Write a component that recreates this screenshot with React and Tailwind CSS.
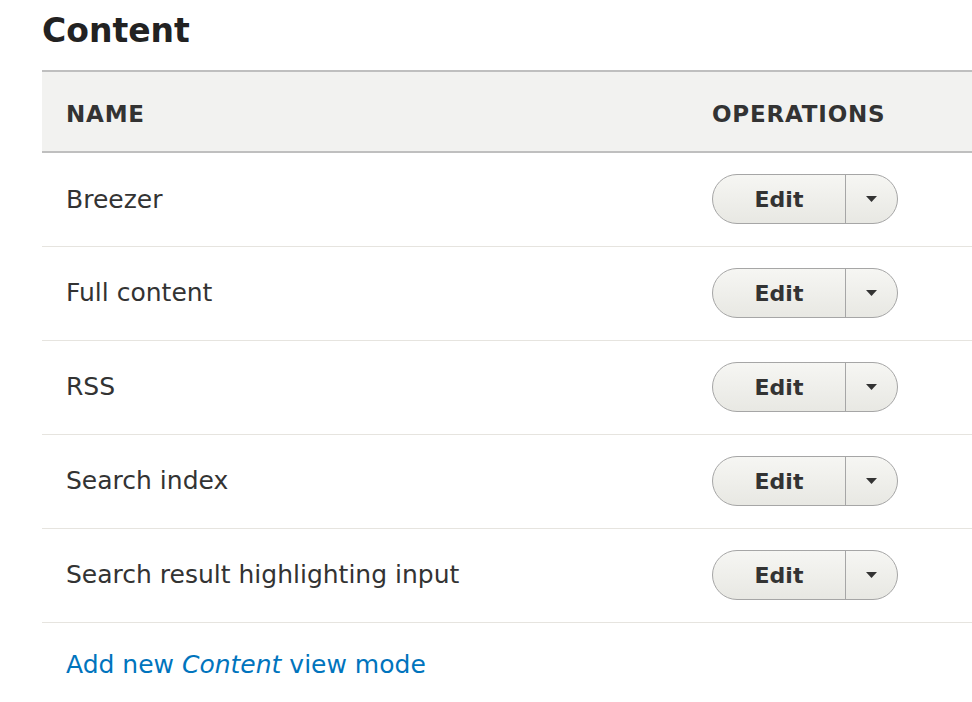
const rows = ["Breezer", "Full content", "RSS", "Search index", "Search result highlighting input"];

const font = { fontFamily: "'DejaVu Sans', 'Open Sans', sans-serif" };

function OpButton() {
  return (
    <div className="flex h-[50px] w-[186px] items-stretch rounded-full border border-[#a6a6a6] bg-gradient-to-b from-[#f6f6f3] to-[#e8e8e3] text-[#333]">
      <div className="flex flex-1 items-center justify-center text-[22px] font-bold">Edit</div>
      <div className="flex w-[52px] items-center justify-center border-l border-[#a6a6a6]">
        <svg width="11" height="6" viewBox="0 0 11 6">
          <path d="M0 0h11L5.5 6z" fill="#333" />
        </svg>
      </div>
    </div>
  );
}

export default function App() {
  return (
    <div className="min-h-screen bg-white pl-[42px] text-[#222]" style={font}>
      <h1 className="pt-[10px] text-[33px] font-bold leading-[42px] text-[#222]">Content</h1>
      <table className="mt-[18px] w-full border-collapse text-left">
        <thead>
          <tr className="h-[81px] border-t-2 border-b-2 border-[#bfbfbf] bg-[#f2f2f0]">
            <th className="w-[670px] pl-6 pt-[5px] text-[23px] font-bold uppercase tracking-[0.8px] text-[#333]">Name</th>
            <th className="pt-[5px] text-[23px] font-bold uppercase tracking-[0.8px] text-[#333]">Operations</th>
          </tr>
        </thead>
        <tbody>
          {rows.map((r) => (
            <tr key={r} className="h-[94px] border-b border-[#e6e4df]">
              <td className="pl-6 text-[25px] text-[#333]">{r}</td>
              <td>
                <OpButton />
              </td>
            </tr>
          ))}
        </tbody>
      </table>
      <a href="#" className="mt-[23px] block pl-6 text-[25px] text-[#0074bd]">
        Add new <em>Content</em> view mode
      </a>
    </div>
  );
}
